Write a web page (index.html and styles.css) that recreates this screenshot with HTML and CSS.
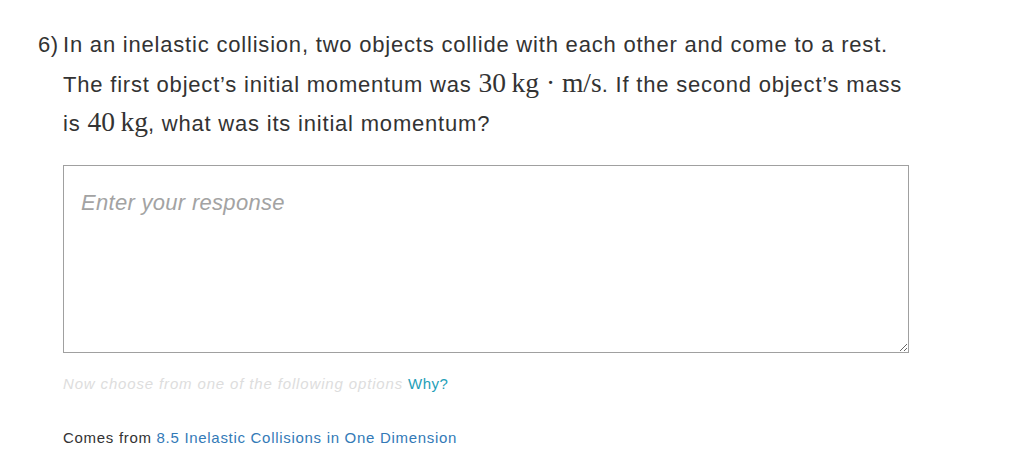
FILE: index.html
```
<!DOCTYPE html>
<html>
<head>
<meta charset="utf-8">
<link rel="stylesheet" href="styles.css">
</head>
<body>
<div class="question">
  <div class="stem">
    <span class="num">6)</span>
    <p class="text">In an inelastic collision, two objects collide with each other and come to a rest. The first object’s initial momentum was <span class="math">30&thinsp;kg&nbsp;<span class="dot">·</span>&nbsp;m/s</span>. If the second object’s mass is <span class="math">40&thinsp;kg</span>, what was its initial momentum?</p>
  </div>
  <div class="answer">
    <textarea class="response" placeholder="Enter your response"></textarea>
    <p class="options">Now choose from one of the following options <a class="why" href="#">Why?</a></p>
    <p class="source">Comes from <a class="link" href="#">8.5 Inelastic Collisions in One Dimension</a></p>
  </div>
</div>
</body>
</html>
```
FILE: styles.css
```
html, body {
  margin: 0;
  padding: 0;
  background: #fff;
}
body {
  font-family: "Liberation Sans", Arial, sans-serif;
  color: #333;
}
.question {
  padding: 26px 0 0 38px;
  width: 875px;
}
.stem {
  display: flex;
}
.num {
  width: 25px;
  flex: none;
  font-size: 22px;
  line-height: 37.5px;
  letter-spacing: 0.5px;
}
.text {
  margin: 0;
  font-size: 22px;
  line-height: 37.5px;
  letter-spacing: 0.8px;
}
.math {
  font-family: "Liberation Serif", "Times New Roman", serif;
  font-size: 27.5px;
  letter-spacing: 0;
}
.answer {
  padding-left: 25px;
  padding-top: 22px;
}
.response {
  display: block;
  box-sizing: border-box;
  width: 846px;
  height: 188px;
  border: 1px solid #a0a0a0;
  padding: 24px 17px 20px;
  margin: 0;
  font-family: "Liberation Sans", Arial, sans-serif;
  font-size: 22px;
  letter-spacing: 0.3px;
  resize: vertical;
}
.response::placeholder {
  color: #a3a3a3;
  font-style: italic;
}
.options {
  margin: 22px 0 0 0;
  font-size: 15px;
  letter-spacing: 0.85px;
  font-style: italic;
  color: #ddd;
}
.why {
  font-style: normal;
  color: #1fa0b8;
  text-decoration: none;
  letter-spacing: 0.5px;
}
.source {
  margin: 37px 0 0 0;
  font-size: 15px;
  letter-spacing: 0.7px;
  color: #333;
}
.link {
  color: #337ab7;
  text-decoration: none;
}
```
